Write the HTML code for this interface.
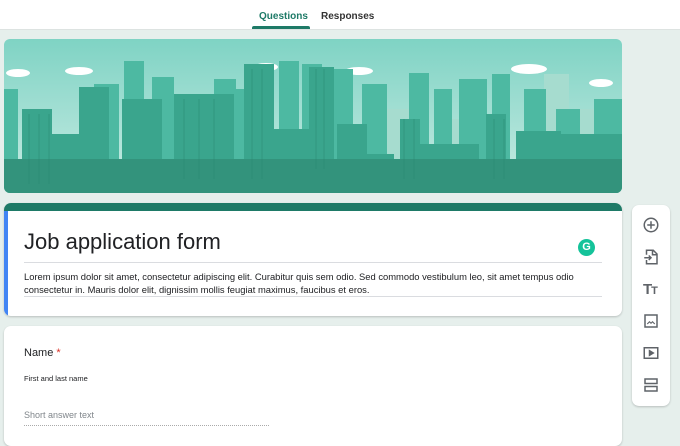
<!DOCTYPE html>
<html><head><style>
body{margin:0;width:680px;height:434px;overflow:hidden;background:#e6efec;font-family:"Liberation Sans",sans-serif;position:relative}
.top{position:absolute;left:0;top:0;width:680px;height:29px;background:#fff;border-bottom:1px solid #dde3e1}
.tab{position:absolute;top:11px;font-size:10px;color:#444}
.card{position:absolute;background:#fff;border-radius:7px;box-shadow:0 1px 2px rgba(0,0,0,.2)}
.side svg{position:absolute;left:10px}
</style></head><body>
<div class="top">
<div class="tab" style="left:259px;color:#1e7a67;font-weight:bold">Questions</div>
<div class="tab" style="left:321px;color:#333;font-weight:bold">Responses</div>
<div style="position:absolute;left:252px;top:26px;width:58px;height:3px;background:#1e7a67;border-radius:2px 2px 0 0"></div>
</div>
<svg style="position:absolute;left:4px;top:39px;border-radius:6px" width="618" height="154" viewBox="0 0 618 154">
<defs><linearGradient id="s" x1="0" y1="0" x2="0" y2="1"><stop offset="0" stop-color="#7fd3c4"/><stop offset="1" stop-color="#c9ece4"/></linearGradient></defs>
<rect width="618" height="154" fill="url(#s)"/>
<g fill="#fff"><ellipse cx="14" cy="34" rx="12" ry="4"/><ellipse cx="75" cy="32" rx="14" ry="4"/><ellipse cx="262" cy="28" rx="12" ry="4"/><ellipse cx="355" cy="32" rx="14" ry="4"/><ellipse cx="525" cy="30" rx="18" ry="5"/><ellipse cx="597" cy="44" rx="12" ry="4"/></g>
<g fill="#a6dccf"><rect x="25" y="80" width="20" height="60"/><rect x="60" y="95" width="25" height="50"/><rect x="170" y="75" width="25" height="60"/><rect x="205" y="60" width="30" height="70"/><rect x="380" y="70" width="30" height="70"/><rect x="440" y="80" width="25" height="60"/><rect x="570" y="70" width="30" height="70"/><rect x="540" y="35" width="25" height="60"/></g>
<g fill="#4db9a2"><rect x="0" y="50" width="14" height="104"/><rect x="90" y="45" width="25" height="109"/><rect x="120" y="22" width="20" height="132"/><rect x="148" y="38" width="22" height="116"/><rect x="210" y="40" width="22" height="114"/><rect x="230" y="50" width="26" height="104"/><rect x="275" y="22" width="20" height="132"/><rect x="298" y="25" width="20" height="129"/><rect x="325" y="30" width="24" height="124"/><rect x="358" y="45" width="25" height="109"/><rect x="405" y="34" width="20" height="120"/><rect x="430" y="50" width="18" height="104"/><rect x="455" y="40" width="28" height="114"/><rect x="488" y="35" width="18" height="119"/><rect x="520" y="50" width="22" height="104"/><rect x="552" y="70" width="24" height="84"/><rect x="590" y="60" width="28" height="94"/></g>
<g fill="#3aa58d"><rect x="18" y="70" width="30" height="84"/><rect x="40" y="95" width="35" height="59"/><rect x="75" y="48" width="30" height="106"/><rect x="118" y="60" width="40" height="94"/><rect x="170" y="55" width="60" height="99"/><rect x="240" y="25" width="30" height="129"/><rect x="305" y="28" width="25" height="126"/><rect x="270" y="90" width="35" height="64"/><rect x="333" y="85" width="30" height="69"/><rect x="350" y="115" width="40" height="39"/><rect x="396" y="80" width="20" height="74"/><rect x="482" y="75" width="20" height="79"/><rect x="415" y="105" width="60" height="49"/><rect x="512" y="92" width="45" height="62"/><rect x="555" y="95" width="63" height="59"/></g>
<rect x="0" y="120" width="618" height="34" fill="#33937c"/>
<g stroke="#2b8a73" stroke-width="0.8" opacity=".7"><path d="M25 75v70M35 75v70M45 75v70M180 60v80M195 60v80M210 60v80M248 30v110M258 30v110M312 30v100M320 30v100M400 80v60M410 80v60M490 80v60M500 80v60"/></g>
</svg>
<div class="card" style="left:4px;top:203px;width:618px;height:113px;overflow:hidden">
<div style="height:8px;background:#1e7a67"></div>
<div style="position:absolute;left:0;top:8px;width:4px;height:105px;background:#4285f4"></div>
<div style="position:absolute;left:20px;top:26px;font-size:22px;color:#202124">Job application form</div>
<div style="position:absolute;left:20px;top:59px;width:578px;height:1px;background:#dadce0"></div>
<div style="position:absolute;left:574px;top:36px;width:17px;height:17px;border-radius:50%;background:#15c39a;color:#fff;font-size:11px;font-weight:bold;text-align:center;line-height:17px">G</div>
<div style="position:absolute;left:20px;top:68px;width:584px;font-size:9.4px;line-height:12.5px;color:#202124">Lorem ipsum dolor sit amet, consectetur adipiscing elit. Curabitur quis sem odio. Sed commodo vestibulum leo, sit amet tempus odio consectetur in. Mauris dolor elit, dignissim mollis feugiat maximus, faucibus et eros.</div>
<div style="position:absolute;left:20px;top:93px;width:578px;height:1px;background:#dadce0"></div>
</div>
<div class="card" style="left:4px;top:326px;width:618px;height:120px">
<div style="position:absolute;left:20px;top:21px;font-size:11px;color:#202124">Name <span style="color:#d93025">*</span></div>
<div style="position:absolute;left:20px;top:48px;font-size:7.5px;color:#202124">First and last name</div>
<div style="position:absolute;left:20px;top:84px;font-size:9px;color:#80868b">Short answer text</div>
<div style="position:absolute;left:20px;top:99px;width:245px;border-bottom:1px dotted #aaa"></div>
</div>
<div class="card side" style="left:632px;top:205px;width:38px;height:201px">
<svg style="top:11px" width="18" height="18" viewBox="0 0 24 24" fill="none" stroke="#5f6368" stroke-width="2"><circle cx="12" cy="12" r="9"/><path d="M12 7v10M7 12h10"/></svg>
<svg style="top:43px" width="18" height="18" viewBox="0 0 24 24" fill="none" stroke="#5f6368" stroke-width="2"><path d="M6 9V3h9l5 5v13H6v-5M14 3v6h6M3 13h9M9 10l3 3-3 3"/></svg>
<div style="position:absolute;left:11px;top:76px;font-size:15px;font-weight:bold;color:#5f6368;letter-spacing:-1px">T<span style="font-size:11px">T</span></div>
<svg style="top:107px" width="18" height="18" viewBox="0 0 24 24" fill="none" stroke="#5f6368" stroke-width="2"><rect x="4" y="4" width="16" height="16"/><path d="M7 16l3-3 2 2 2-2 3 3" stroke-width="1.5"/></svg>
<svg style="top:139px" width="18" height="18" viewBox="0 0 24 24" fill="none" stroke="#5f6368" stroke-width="2"><rect x="3" y="5" width="18" height="14"/><path d="M10 9v6l5-3z" fill="#5f6368"/></svg>
<svg style="top:171px" width="18" height="18" viewBox="0 0 24 24" fill="none" stroke="#5f6368" stroke-width="2"><rect x="4" y="4" width="16" height="6"/><rect x="4" y="14" width="16" height="6"/></svg>
</div>
</body></html>
